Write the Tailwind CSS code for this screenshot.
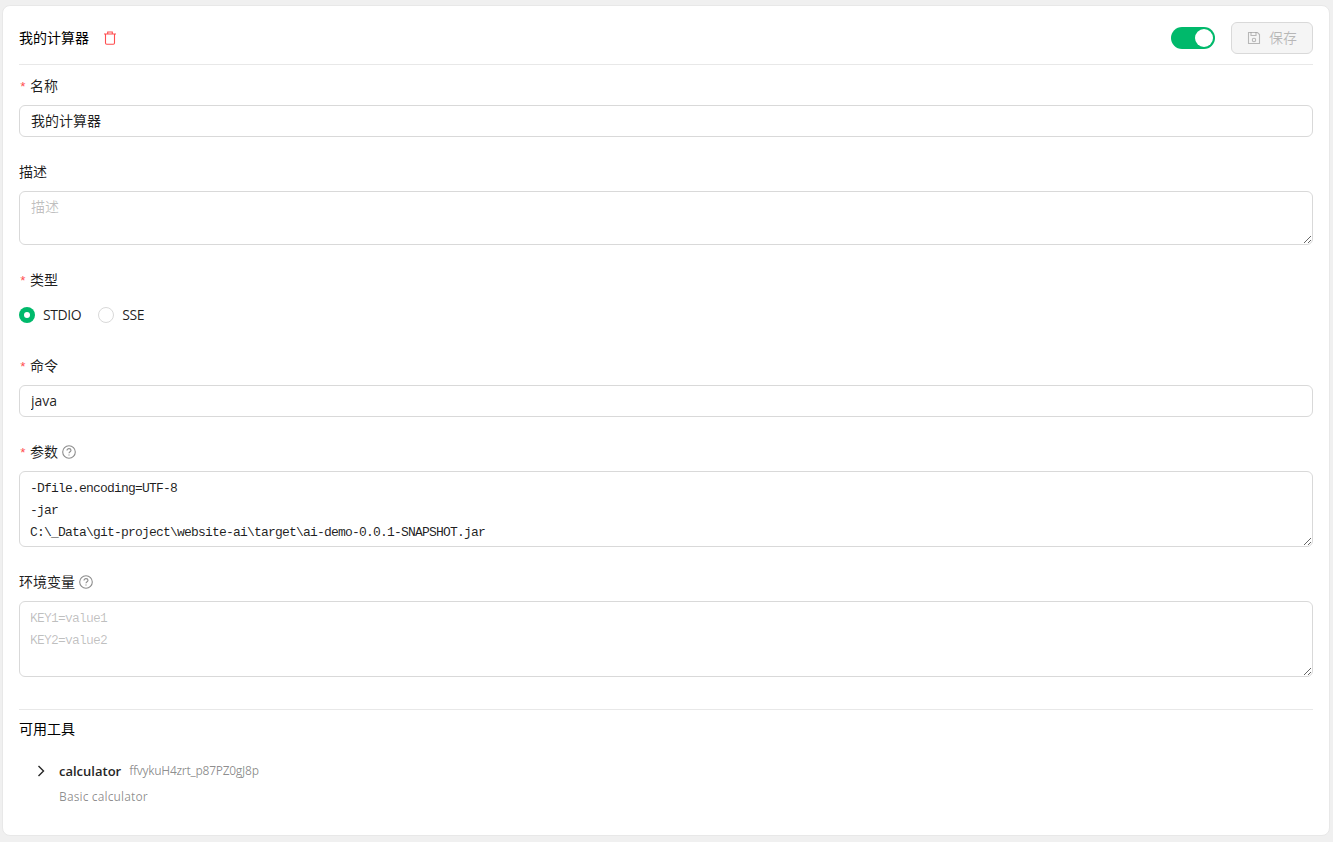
<!DOCTYPE html>
<html lang="zh">
<head>
<meta charset="utf-8">
<script src="https://cdn.jsdelivr.net/npm/@tailwindcss/browser@4"></script>
<title>我的计算器</title>
</head>
<body class="m-0 h-[842px] overflow-hidden bg-[#f0f0f0] font-['Open_Sans','Noto_Sans_CJK_SC',sans-serif] text-[14px] leading-[22px] text-black/88">
<div class="pl-[2px] pr-[3px] pt-[5px]">
  <div class="h-[831px] rounded-lg border border-[#e8e8e8] bg-white px-[16px] pt-[16px]">
    <div class="flex h-[43px] items-start justify-between border-b border-[#e8e8e8]">
      <div class="flex h-8 items-center">
        <span class="text-black">我的计算器</span>
        <svg class="ml-[14px]" width="14" height="14" viewBox="0 0 14 14" fill="none" stroke="#ff4d4f" stroke-width="1.100"><path d="M1 3h12M4.700 3V1h4.600v2M2.500 3v9c0 .6.500 1.200 1.200 1.200h6.600c.7 0 1.200-.6 1.200-1.200V3"/></svg>
      </div>
      <div class="flex items-center">
        <div class="relative h-[22px] w-11 rounded-full bg-[#00b96b]">
          <div class="absolute right-[2px] top-[2px] h-[18px] w-[18px] rounded-full bg-white"></div>
        </div>
        <button class="ml-4 flex h-8 w-[82px] items-center justify-center rounded-md border border-[#d9d9d9] bg-black/4 text-black/25">
          <svg width="14" height="14" viewBox="0 0 14 14" fill="none" stroke="currentColor" stroke-width="1.100"><path d="M1.500 1.500h9l2 2v9h-11z"/><path d="M4 1.500v3h5v-3"/><circle cx="7" cy="9" r="1.700"/></svg>
          <span class="ml-2">保存</span>
        </button>
      </div>
    </div>

    <div class="pt-[10px]">
      <label class="mb-2 flex h-[22px] items-center"><span class="mr-1 w-[7px] pt-[3px] font-['Liberation_Mono',monospace] text-[13px] text-[#ff4d4f]">*</span>名称</label>
      <input class="block h-8 w-full rounded-md border border-[#d9d9d9] px-[11px] pb-[2px] outline-none" value="我的计算器">

      <label class="mb-2 mt-6 flex h-[22px] items-center">描述</label>
      <textarea class="block h-[54px] w-full rounded-md border border-[#d9d9d9] px-[11px] pb-[5px] pt-[4px] outline-none placeholder:text-black/25" placeholder="描述"></textarea>

      <label class="mb-2 mt-6 flex h-[22px] items-center"><span class="mr-1 w-[7px] pt-[3px] font-['Liberation_Mono',monospace] text-[13px] text-[#ff4d4f]">*</span>类型</label>
      <div class="flex h-8 items-center">
        <span class="flex h-4 w-4 items-center justify-center rounded-full bg-[#00b96b]"><span class="h-[6px] w-[6px] rounded-full bg-white"></span></span>
        <span class="ml-2 tracking-[-0.4px]">STDIO</span>
        <span class="ml-[17px] h-4 w-4 rounded-full border border-[#d9d9d9]"></span>
        <span class="ml-2 tracking-[-0.5px]">SSE</span>
      </div>

      <label class="mb-2 mt-6 flex h-[22px] items-center"><span class="mr-1 w-[7px] pt-[3px] font-['Liberation_Mono',monospace] text-[13px] text-[#ff4d4f]">*</span>命令</label>
      <input class="block h-8 w-full rounded-md border border-[#d9d9d9] px-[11px] pb-[2px] outline-none" value="java">

      <label class="mb-2 mt-6 flex h-[22px] items-center"><span class="mr-1 w-[7px] pt-[3px] font-['Liberation_Mono',monospace] text-[13px] text-[#ff4d4f]">*</span>参数
        <svg class="ml-1" width="14" height="14" viewBox="0 0 14 14" fill="none" stroke="#8c8c8c" stroke-width="1.100"><circle cx="7" cy="7" r="6.300"/><path d="M5 5.400c0-1.100.9-1.800 2-1.800s2 .7 2 1.700c0 1.400-2 1.400-2 3"/><path d="M7 9.400v1.200"/></svg>
      </label>
      <textarea class="block h-[76px] w-full rounded-md border border-[#d9d9d9] pb-[4px] pl-[10px] pr-[11px] pt-[6px] font-['Liberation_Mono',monospace] text-[13px] leading-[22px] tracking-[-0.8px] outline-none">-Dfile.encoding=UTF-8
-jar
C:\_Data\git-project\website-ai\target\ai-demo-0.0.1-SNAPSHOT.jar</textarea>

      <label class="mb-2 mt-6 flex h-[22px] items-center">环境变量
        <svg class="ml-1" width="14" height="14" viewBox="0 0 14 14" fill="none" stroke="#8c8c8c" stroke-width="1.100"><circle cx="7" cy="7" r="6.300"/><path d="M5 5.400c0-1.100.9-1.800 2-1.800s2 .7 2 1.700c0 1.400-2 1.400-2 3"/><path d="M7 9.400v1.200"/></svg>
      </label>
      <textarea class="block h-[76px] w-full rounded-md border border-[#d9d9d9] pb-[4px] pl-[10px] pr-[11px] pt-[6px] font-['Liberation_Mono',monospace] text-[13px] leading-[22px] tracking-[-0.8px] outline-none placeholder:text-black/25" placeholder="KEY1=value1&#10;KEY2=value2"></textarea>
    </div>

    <div class="mt-8 border-t border-[#e8e8e8] pt-2">
      <div class="h-[22px] text-black">可用工具</div>
      <div class="mt-5 flex items-start pl-[18px]">
        <svg class="mt-[4px]" width="10" height="14" viewBox="0 0 10 14" fill="none" stroke="#262626" stroke-width="1.400"><path d="M1.500 2l5 5-5 5"/></svg>
        <div class="ml-[12px]">
          <div class="flex h-[22px] items-center">
            <span class="text-[13px] font-semibold text-[#262626]">calculator</span>
            <span class="ml-2 text-[12px] tracking-[-0.27px] text-black/45">ffvykuH4zrt_p87PZ0gJ8p</span>
          </div>
          <div class="mt-[4px] text-[12px] tracking-[0.13px] text-black/45">Basic calculator</div>
        </div>
      </div>
    </div>
  </div>
</div>
</body>
</html>
